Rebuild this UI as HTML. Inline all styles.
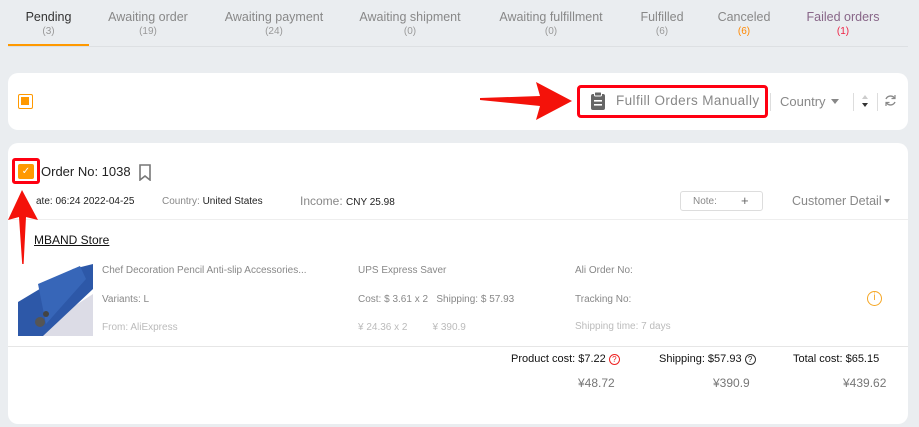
<!DOCTYPE html>
<html><head><meta charset="utf-8"><style>
*{margin:0;padding:0;box-sizing:border-box}
body{width:919px;height:427px;background:#eaedf0;font-family:"Liberation Sans",sans-serif;position:relative;overflow:hidden;color:#333}
.a{position:absolute;white-space:nowrap}
.tab{position:absolute;top:10px;text-align:center;font-size:12.5px;color:#888;line-height:15px}
.tab small{display:block;font-size:10px;color:#999;line-height:14px}
.card{position:absolute;background:#fff;border-radius:10px}
.g{color:#888;font-size:10px}
.l{color:#bbb;font-size:10px}
</style></head><body>
<div class="tab" style="left:8px;width:81px;color:#333">Pending<small>(3)</small></div>
<div class="tab" style="left:96px;width:104px">Awaiting order<small>(19)</small></div>
<div class="tab" style="left:218px;width:112px">Awaiting payment<small>(24)</small></div>
<div class="tab" style="left:352px;width:116px">Awaiting shipment<small>(0)</small></div>
<div class="tab" style="left:495px;width:112px">Awaiting fulfillment<small>(0)</small></div>
<div class="tab" style="left:630px;width:64px">Fulfilled<small>(6)</small></div>
<div class="tab" style="left:712px;width:64px">Canceled<small style="color:#f80">(6)</small></div>
<div class="tab" style="left:798px;width:90px;color:#868">Failed orders<small style="color:#e24">(1)</small></div>
<div class="a" style="left:8px;top:44px;width:81px;height:3px;background:#f90"></div>
<div class="a" style="left:8px;top:46px;width:900px;height:1px;background:#dde0e3"></div>

<div class="card" style="left:8px;top:73px;width:900px;height:57px"></div>
<div class="a" style="left:18px;top:94px;width:15px;height:15px;border:1.5px solid #f90;border-radius:2px;background:#fff"><div style="margin:2px;width:8px;height:8px;background:#f90"></div></div>
<div class="a" style="left:577px;top:85px;width:191px;height:33px;border:3px solid #f01;border-radius:4px"></div>
<svg class="a" style="left:590px;top:91px" width="16" height="20" viewBox="0 0 16 20"><rect x="1" y="3" width="14" height="16" rx="2" fill="#666"/><rect x="4.5" y="1" width="7" height="4" rx="1" fill="#666" stroke="#fff" stroke-width="1"/><rect x="4" y="9" width="8" height="1.6" fill="#fff"/><rect x="4" y="13" width="8" height="1.6" fill="#fff"/></svg>
<div class="a" style="left:616px;top:93px;font-size:13.5px;color:#888;letter-spacing:.4px">Fulfill Orders Manually</div>
<div class="a" style="left:770px;top:93px;width:1px;height:18px;background:#ddd"></div>
<div class="a" style="left:780px;top:94px;font-size:13px;color:#888">Country</div>
<div class="a" style="left:831px;top:99px;border:4px solid transparent;border-top:5px solid #888"></div>
<div class="a" style="left:853px;top:93px;width:1px;height:18px;background:#ddd"></div>
<div class="a" style="left:862px;top:92px;border:3px solid transparent;border-bottom:4px solid #ccc"></div>
<div class="a" style="left:862px;top:103px;border:3px solid transparent;border-top:4px solid #333"></div>
<div class="a" style="left:877px;top:93px;width:1px;height:18px;background:#ddd"></div>
<svg class="a" style="left:884px;top:94px" width="13" height="13"><path d="M10.5 4A5 5 0 0 0 2 5M2.5 9A5 5 0 0 0 11 8" fill="none" stroke="#888" stroke-width="1.4"/><path d="M11 1v3.5H7.5M2 12V8.5h3.5" fill="none" stroke="#888" stroke-width="1.2"/></svg>
<svg class="a" style="left:478px;top:80px" width="100" height="40"><polygon points="2,18 62,16 58,2 94,21 58,40 62,26 2,20" fill="#f4120a"/></svg>

<div class="card" style="left:8px;top:143px;width:900px;height:281px"></div>
<div class="a" style="left:12px;top:158px;width:28px;height:26px;border:3px solid #f01;border-radius:3px"></div>
<div class="a" style="left:18px;top:164px;width:16px;height:15px;background:#f90;border-radius:2px;color:#fff;font-size:10px;text-align:center;line-height:15px">✓</div>
<div class="a" style="left:41px;top:164px;font-size:13px;color:#222">Order No: 1038</div>
<svg class="a" style="left:138px;top:164px" width="14" height="17"><path d="M2 1h10v15l-5-4-5 4z" fill="none" stroke="#777" stroke-width="1.6"/></svg>
<div class="a" style="left:36px;top:196px;font-size:10px;color:#222">ate: 06:24 2022-04-25</div>
<div class="a" style="left:162px;top:196px;font-size:10px;color:#222"><span style="color:#888">Country: </span>United States</div>
<div class="a" style="left:300px;top:194px;font-size:10px;color:#222"><span style="color:#888;font-size:12px">Income: </span>CNY 25.98</div>
<div class="a" style="left:680px;top:191px;width:83px;height:20px;border:1px solid #ddd;border-radius:3px;font-size:10px;color:#888;padding:4px 0 0 12px">Note:<span style="position:absolute;left:60px;top:1px;font-size:13px;color:#666">+</span></div>
<div class="a" style="left:792px;top:194px;font-size:12.5px;color:#888">Customer Detail</div>
<div class="a" style="left:884px;top:199px;border:3.5px solid transparent;border-top:4px solid #888"></div>
<div class="a" style="left:8px;top:219px;width:900px;height:1px;background:#eee"></div>
<svg class="a" style="left:6px;top:188px" width="36" height="90"><polygon points="16,2 32,32 20,29 17,88 13,29 2,32" fill="#f4120a"/></svg>
<div class="a" style="left:34px;top:233px;font-size:12px;color:#111;text-decoration:underline">MBAND Store</div>
<svg class="a" style="left:18px;top:264px" width="75" height="72"><rect width="75" height="72" fill="#fff"/><polygon points="10,72 75,30 75,72" fill="#dcdce6"/><polygon points="0,38 55,5 75,0 75,25 25,72 0,72" fill="#2d58a8"/><polygon points="20,20 62,2 68,15 28,60" fill="#3766b8"/><circle cx="22" cy="58" r="5" fill="#555"/><circle cx="28" cy="50" r="3" fill="#444"/></svg>
<div class="a g" style="left:102px;top:265px">Chef Decoration Pencil Anti-slip Accessories...</div>
<div class="a g" style="left:102px;top:294px">Variants: L</div>
<div class="a l" style="left:102px;top:322px">From: AliExpress</div>
<div class="a g" style="left:358px;top:265px">UPS Express Saver</div>
<div class="a g" style="left:358px;top:294px">Cost: $ 3.61 x 2 &nbsp; Shipping: $ 57.93</div>
<div class="a l" style="left:358px;top:322px">¥ 24.36 x 2 &nbsp; &nbsp; &nbsp; &nbsp; ¥ 390.9</div>
<div class="a g" style="left:575px;top:265px">Ali Order No:</div>
<div class="a g" style="left:575px;top:294px">Tracking No:</div>
<div class="a l" style="left:575px;top:321px">Shipping time: 7 days</div>
<div class="a" style="left:867px;top:291px;width:15px;height:15px;border:1.5px solid #f5a623;border-radius:50%;color:#f5a623;font-size:10px;text-align:center;line-height:12px">i</div>
<div class="a" style="left:8px;top:346px;width:900px;height:1px;background:#e6e6e6"></div>
<div class="a" style="left:511px;top:353px;font-size:11px;color:#111">Product cost: $7.22 <span style="display:inline-block;width:11px;height:11px;border:1.3px solid #e22;border-radius:50%;color:#e22;font-size:8px;text-align:center;line-height:9px">?</span></div>
<div class="a" style="left:659px;top:353px;font-size:11px;color:#111">Shipping: $57.93 <span style="display:inline-block;width:11px;height:11px;border:1.3px solid #333;border-radius:50%;font-size:8px;text-align:center;line-height:9px">?</span></div>
<div class="a" style="left:793px;top:353px;font-size:11px;color:#111">Total cost: $65.15</div>
<div class="a" style="left:578px;top:376px;font-size:12px;color:#777">¥48.72</div>
<div class="a" style="left:713px;top:376px;font-size:12px;color:#777">¥390.9</div>
<div class="a" style="left:843px;top:376px;font-size:12px;color:#777">¥439.62</div>
</body></html>
